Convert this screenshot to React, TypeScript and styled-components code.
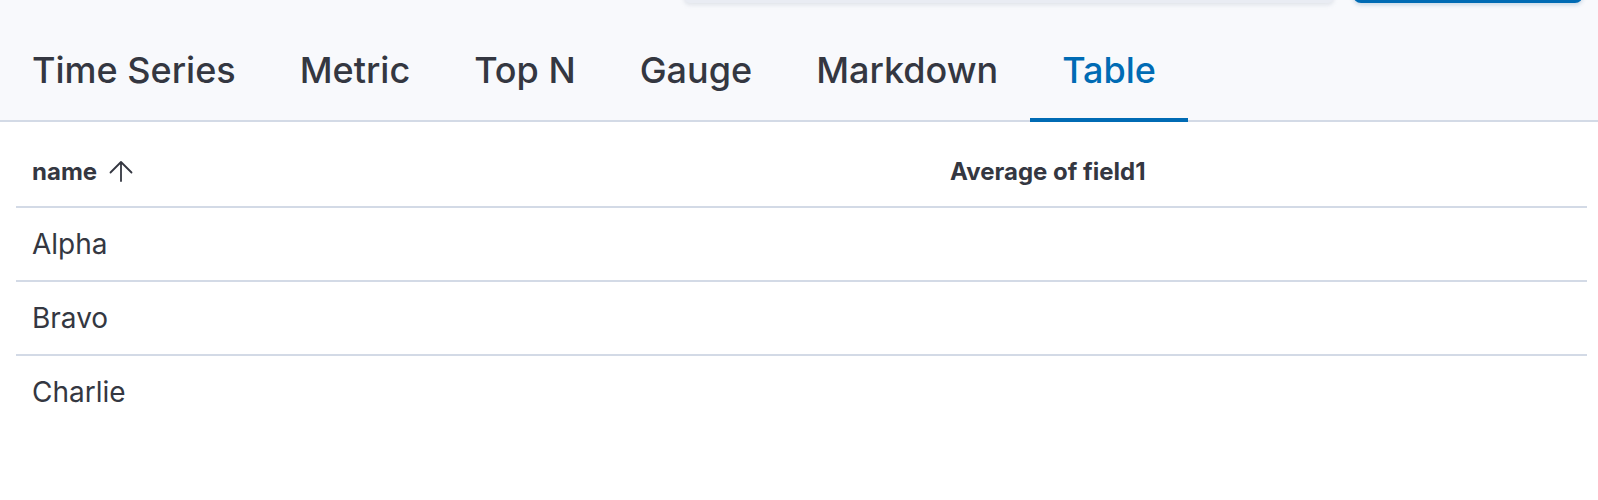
import React from 'react';
import styled, { createGlobalStyle } from 'styled-components';

const GlobalStyle = createGlobalStyle`
  body {
    margin: 0;
    background: #fff;
    font-family: Inter, "Noto Sans", sans-serif;
    color: #343741;
  }
`;

const tabs = ['Time Series', 'Metric', 'Top N', 'Gauge', 'Markdown', 'Table'];
const rows = ['Alpha', 'Bravo', 'Charlie'];

const SortUpIcon = () => (
  <svg width="24" height="22" viewBox="0 0 24 22" fill="none">
    <path
      d="M1.5 12.5 12 2 22.5 12.5M12 2V21"
      stroke="#343741"
      strokeWidth="1.8"
      strokeLinecap="round"
      strokeLinejoin="round"
    />
  </svg>
);

export default function App() {
  return (
    <>
      <GlobalStyle />
      <Page>
        <Header>
          <Toolbar>
            <QueryInput />
            <ApplyButton />
          </Toolbar>
          <TabList>
            {tabs.map((tab) => (
              <Tab key={tab} selected={tab === 'Table'}>
                {tab}
              </Tab>
            ))}
          </TabList>
        </Header>

        <Table>
          <HeadRow>
            <HeadCell>
              name
              <SortUpIcon />
            </HeadCell>
            <HeadCell>Average of field1</HeadCell>
          </HeadRow>
          {rows.map((row) => (
            <Row key={row}>
              <Cell>{row}</Cell>
              <Cell />
            </Row>
          ))}
        </Table>
      </Page>
    </>
  );
}

const Page = styled.div`
  width: 1598px;
  height: 500px;
  overflow: hidden;
`;

const Header = styled.div`
  background: #f8f9fc;
  border-bottom: 2px solid #d3dae6;
`;

const Toolbar = styled.div`
  display: flex;
  justify-content: flex-end;
  gap: 19px;
  height: 60px;
  margin-top: -57px;
  margin-bottom: 19px;
  padding-right: 15px;
`;

const QueryInput = styled.div`
  width: 650px;
  background: #e9ecf3;
  border-radius: 0 0 6px 6px;
  box-shadow: 0 2px 4px rgba(152, 162, 179, 0.25);
`;

const ApplyButton = styled.div`
  width: 230px;
  background: #006bb4;
  border-radius: 0 0 8px 8px;
  box-shadow: 0 2px 4px rgba(0, 80, 140, 0.2);
`;

const TabList = styled.div`
  display: flex;
  margin-bottom: -2px;
`;

const Tab = styled.div<{ selected: boolean }>`
  height: 96px;
  display: flex;
  align-items: center;
  padding: 0 32px;
  border-bottom: 4px solid ${({ selected }) => (selected ? '#006bb4' : 'transparent')};
  font-size: 36px;
  font-weight: 500;
  color: ${({ selected }) => (selected ? '#006bb4' : '#343741')};
  white-space: nowrap;
`;

const Table = styled.div`
  margin: 14px 11px 0 16px;
`;

const HeadRow = styled.div`
  display: grid;
  grid-template-columns: 918px 1fr;
  height: 70px;
  border-bottom: 2px solid #d3dae6;
`;

const HeadCell = styled.div`
  display: flex;
  align-items: center;
  gap: 12px;
  padding: 0 16px;
  font-size: 24px;
  font-weight: 700;
  color: #343741;
`;

const Row = styled.div`
  display: grid;
  grid-template-columns: 918px 1fr;
  height: 72px;
  border-bottom: 2px solid #d3dae6;

  &:last-child {
    border-bottom: none;
  }
`;

const Cell = styled.div`
  display: flex;
  align-items: center;
  padding: 0 16px;
  font-size: 28px;
  color: #343741;
`;
